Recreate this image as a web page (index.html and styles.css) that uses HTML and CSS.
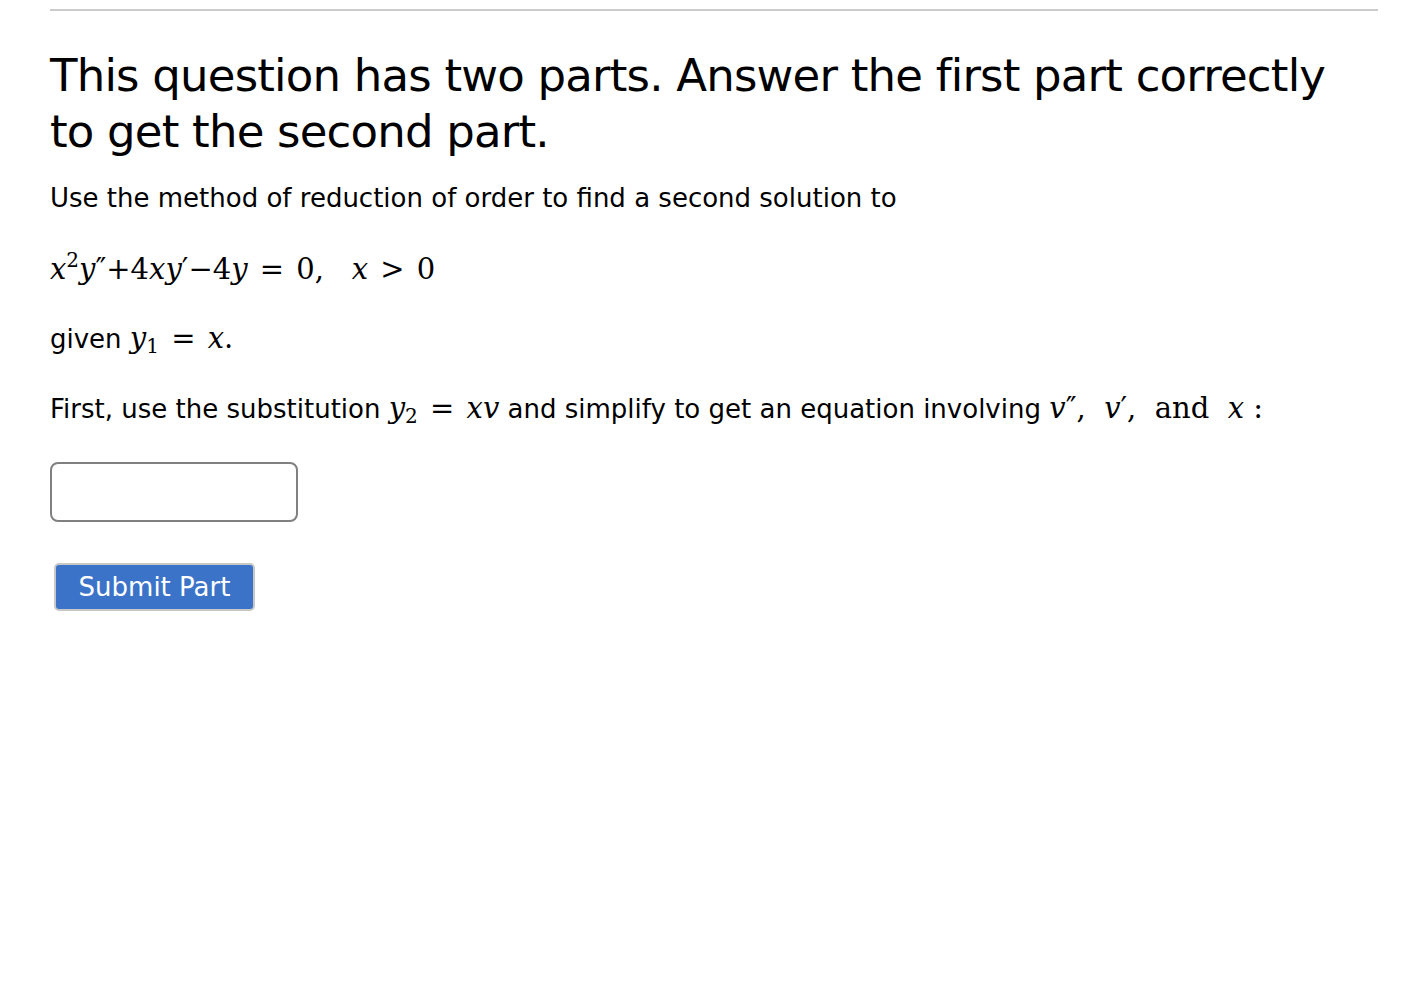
FILE: index.html
```html
<!DOCTYPE html>
<html lang="en">
<head>
  <meta charset="UTF-8">
  <title>Question</title>
  <link rel="stylesheet" href="styles.css">
</head>
<body>

<div class="question">
  <div class="top-rule"></div>

  <h1>This question has two parts. Answer the first part correctly to get the second part.</h1>

  <p class="text">Use the method of reduction of order to find a second solution to</p>

  <p class="math-line">
    <span class="m"><i>x</i><sup>2</sup><i>y</i>&Prime;+4<i>xy</i>&prime;&minus;4<i>y</i> <span class="op">=</span> 0,&nbsp;&nbsp; <i>x</i> <span class="op">&gt;</span> 0</span>
  </p>

  <p class="text given">given <span class="m"><i>y</i><sub>1</sub> <span class="op">=</span> <i>x</i>.</span></p>

  <p class="text">First, use the substitution <span class="m"><i>y</i><sub>2</sub> <span class="op">=</span> <i>xv</i></span> and simplify to get an equation involving <span class="m"><i>v</i>&Prime;,&nbsp; <i>v</i>&prime;,&nbsp; and&nbsp; <i>x</i> :</span></p>

  <!-- answer box -->
  <div class="answer">
    <input type="text" class="answer-input">
  </div>

  <button class="submit-button">Submit Part</button>
</div>

</body>
</html>
```

FILE: styles.css
```css
body {
  font-family: "DejaVu Sans", sans-serif;
  color: #000;
  background: #fff;
  margin: 0;
  padding: 0;
}

.question {
  padding: 0 48px 0 50px;
}

.top-rule {
  margin-top: 9px;
  height: 2px;
  background-color: #cccccc;
}

h1 {
  font-size: 45px;
  font-weight: normal;
  line-height: 56px;
  margin: 37px 0 22px 0;
  letter-spacing: -0.8px;
}

.text {
  font-size: 26px;
  line-height: 32px;
  margin: 0 0 37px 0;
}

.given {
  margin-bottom: 38px;
}

.math-line {
  margin: 0 0 29px 0;
  padding-top: 3px;
  line-height: 40px;
}

.m {
  font-family: "DejaVu Serif", serif;
  font-size: 29px;
  line-height: 1;
}

.m sup {
  font-size: 20px;
  vertical-align: 12px;
  line-height: 0;
}

.m sub {
  font-size: 20px;
  vertical-align: -5px;
  line-height: 0;
}

.op {
  margin: 0 3px;
}

.answer {
  margin-top: 12px;
}

.answer-input {
  width: 248px;
  height: 60px;
  box-sizing: border-box;
  border: 2px solid #808080;
  border-radius: 8px;
  font-size: 20px;
}

.submit-button {
  margin: 41px 0 0 4px;
  width: 201px;
  height: 48px;
  background-color: #3b73c9;
  color: #fff;
  font-family: "DejaVu Sans", sans-serif;
  font-size: 26px;
  border: 2px solid #c8c8c8;
  border-radius: 5px;
  cursor: pointer;
}
```
